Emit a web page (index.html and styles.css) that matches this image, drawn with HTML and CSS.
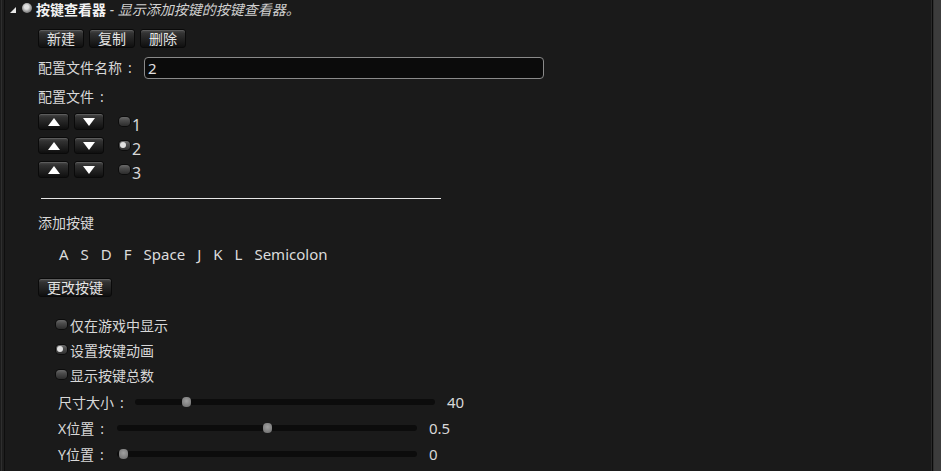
FILE: index.html
```html
<!DOCTYPE html>
<html lang="zh-CN">
<head>
<meta charset="utf-8">
<title>按键查看器</title>
<link rel="stylesheet" href="styles.css">
</head>
<body>
<div class="window">
  <div class="edge"></div>
  <div class="main">
    <div class="header">
      <svg class="tri" width="8" height="8" viewBox="0 0 8 8"><polygon points="1,7 7,1 7,7" fill="#e8e8e8"/></svg>
      <span class="hdr-radio"></span>
      <b class="title">按键查看器</b><i class="desc">&nbsp;- 显示添加按键的按键查看器。</i>
    </div>
    <div class="content">
      <div class="btnrow">
        <span class="btn">新建</span>
        <span class="btn">复制</span>
        <span class="btn">删除</span>
      </div>
      <div class="field">
        <span class="label">配置文件名称<span class="colon">:</span></span>
        <div class="input">2</div>
      </div>
      <div class="label section">配置文件<span class="colon">:</span></div>
      <div class="profiles">
        <div class="prow">
          <span class="btn arrow"><svg width="12" height="8" viewBox="0 0 12 8"><polygon points="6,0 12,8 0,8" fill="#fff"/></svg></span>
          <span class="btn arrow"><svg width="12" height="8" viewBox="0 0 12 8"><polygon points="0,0 12,0 6,8" fill="#fff"/></svg></span>
          <span class="pill"></span><span class="num">1</span>
        </div>
        <div class="prow">
          <span class="btn arrow"><svg width="12" height="8" viewBox="0 0 12 8"><polygon points="6,0 12,8 0,8" fill="#fff"/></svg></span>
          <span class="btn arrow"><svg width="12" height="8" viewBox="0 0 12 8"><polygon points="0,0 12,0 6,8" fill="#fff"/></svg></span>
          <span class="pill on"></span><span class="num">2</span>
        </div>
        <div class="prow">
          <span class="btn arrow"><svg width="12" height="8" viewBox="0 0 12 8"><polygon points="6,0 12,8 0,8" fill="#fff"/></svg></span>
          <span class="btn arrow"><svg width="12" height="8" viewBox="0 0 12 8"><polygon points="0,0 12,0 6,8" fill="#fff"/></svg></span>
          <span class="pill"></span><span class="num">3</span>
        </div>
      </div>
      <div class="sep"></div>
      <div class="label addkeys">添加按键</div>
      <div class="keys">
        <span>A</span><span>S</span><span>D</span><span>F</span><span>Space</span><span>J</span><span>K</span><span>L</span><span>Semicolon</span>
      </div>
      <div class="btnrow change"><span class="btn">更改按键</span></div>
      <div class="checks">
        <div class="crow"><span class="pill"></span><span>仅在游戏中显示</span></div>
        <div class="crow"><span class="pill on"></span><span>设置按键动画</span></div>
        <div class="crow"><span class="pill"></span><span>显示按键总数</span></div>
      </div>
      <div class="sliders">
        <div class="srow">
          <span class="slabel wide">尺寸大小<span class="colon">:</span></span>
          <div class="track"><span class="knob" style="left:17%"></span></div>
          <span class="val">40</span>
        </div>
        <div class="srow">
          <span class="slabel">X位置<span class="colon">:</span></span>
          <div class="track"><span class="knob" style="left:50%"></span></div>
          <span class="val">0.5</span>
        </div>
        <div class="srow">
          <span class="slabel">Y位置<span class="colon">:</span></span>
          <div class="track"><span class="knob" style="left:2%"></span></div>
          <span class="val">0</span>
        </div>
      </div>
    </div>
  </div>
  <div class="scrollbar"></div>
</div>
</body>
</html>
```
FILE: styles.css
```css
* { box-sizing: border-box; }
html, body {
  margin: 0;
  padding: 0;
  background: #1a1a1a;
}
body {
  width: 941px;
  height: 471px;
  overflow: hidden;
  font-family: "Noto Sans", "Noto Sans CJK SC", sans-serif;
  font-size: 14px;
  color: #d8d8d8;
}
.colon {
  display: inline-block;
  width: 14px;
  text-align: center;
  padding-left: 2px;
}
.window {
  display: flex;
  height: 471px;
}
.edge {
  width: 6px;
  background: linear-gradient(to right, #1c1c1c 0 1px, #2e2e2e 1px 2px, #1e1e1e 2px 4px, #0e0e0e 4px 5px, #1a1a1a 5px 6px);
}
.main {
  flex: 1;
  background: #1a1a1a;
  border-right: 1px solid #2a2a2a;
}
.scrollbar {
  width: 9px;
  background: linear-gradient(to right, #0b0b0b 0 1px, #2f2f2f 1px 2px, #3c3c3c 2px 9px);
}
.header {
  height: 20px;
  display: flex;
  align-items: center;
  white-space: nowrap;
}
.tri { margin-left: 3px; }
.hdr-radio {
  width: 10px;
  height: 10px;
  border-radius: 50%;
  margin-left: 5px;
  margin-top: -5px;
  background: radial-gradient(circle at 45% 40%, #e0e0e0 0 25%, #9a9a9a 55%, #555 100%);
}
.title {
  margin-left: 4px;
  color: #f2f2f2;
  font-weight: bold;
  line-height: 20px;
}
.desc {
  color: #d0d0d0;
  line-height: 20px;
}
.content {
  padding-left: 32px;
}
.btnrow {
  display: flex;
  gap: 5px;
  margin-top: 9px;
  height: 19px;
}
.btn {
  display: inline-flex;
  align-items: center;
  justify-content: center;
  height: 19px;
  padding: 0 8px;
  border-radius: 3px;
  background: linear-gradient(to bottom, #4c4c4c 0, #323232 20%, #1c1c1c 70%, #0f0f0f 100%);
  border: 1px solid #0a0a0a;
  box-shadow: inset 0 1px 0 #5c5c5c;
  color: #e4e4e4;
  line-height: 17px;
}
.field {
  display: flex;
  align-items: center;
  margin-top: 9px;
  height: 22px;
}
.label { line-height: 20px; white-space: nowrap; }
.field .label { width: 106px; }
.input {
  width: 400px;
  height: 22px;
  background: #0b0b0b;
  border: 1px solid #8a8a8a;
  border-radius: 4px;
  padding-left: 3px;
  line-height: 20px;
  font-size: 15px;
  color: #e0e0e0;
}
.section { margin-top: 8px; }
.profiles {
  margin-top: 6px;
  display: flex;
  flex-direction: column;
  gap: 7px;
}
.prow {
  display: flex;
  align-items: center;
  height: 17px;
}
.btn.arrow {
  width: 31px;
  height: 17px;
  padding: 0;
  margin-right: 5px;
}
.btn.arrow + .btn.arrow { width: 30px; margin-right: 0; }
.pill {
  display: inline-block;
  flex: none;
  width: 11px;
  height: 9px;
  border-radius: 4px;
  background: linear-gradient(to bottom, #6a6a6a 0, #4a4a4a 40%, #2c2c2c 100%);
  box-shadow: 0 0 0 1px #0c0c0c;
  position: relative;
}
.pill.on {
  background: linear-gradient(to bottom, #6e6e6e 0, #4e4e4e 40%, #2e2e2e 100%);
}
.pill.on::after {
  content: "";
  position: absolute;
  left: 1px;
  top: 1px;
  width: 6px;
  height: 6px;
  border-radius: 50%;
  background: #e0e0e0;
}
.prow .pill { margin-left: 15px; }
.prow .num {
  margin-left: 2px;
  font-size: 16px;
  margin-top: 7px;
  line-height: 17px;
}
.sep {
  margin-top: 20px;
  margin-left: 3px;
  width: 400px;
  height: 1px;
  background: #e6e6e6;
}
.addkeys { margin-top: 14px; }
.keys {
  margin-top: 11px;
  margin-left: 21px;
  display: flex;
  gap: 12px;
  font-size: 15px;
  line-height: 20px;
  color: #dcdcdc;
}
.btnrow.change { margin-top: 14px; }
.checks {
  margin-top: 15px;
  margin-left: 18px;
}
.crow {
  display: flex;
  align-items: center;
  height: 25px;
  gap: 3px;
}
.sliders { margin-top: 2px; margin-left: 20px; }
.srow {
  display: flex;
  align-items: center;
  height: 26px;
}
.slabel { width: 59px; white-space: nowrap; }
.slabel.wide { width: 77px; }
.track {
  position: relative;
  width: 300px;
  height: 6px;
  border-radius: 3px;
  background: #0c0c0c;
}
.knob {
  position: absolute;
  top: -2px;
  width: 9px;
  height: 10px;
  margin-left: -4px;
  border-radius: 4px;
  background: radial-gradient(circle at 50% 40%, #a0a0a0, #7a7a7a 70%, #555);
}
.val { margin-left: 12px; font-size: 15px; }
```
